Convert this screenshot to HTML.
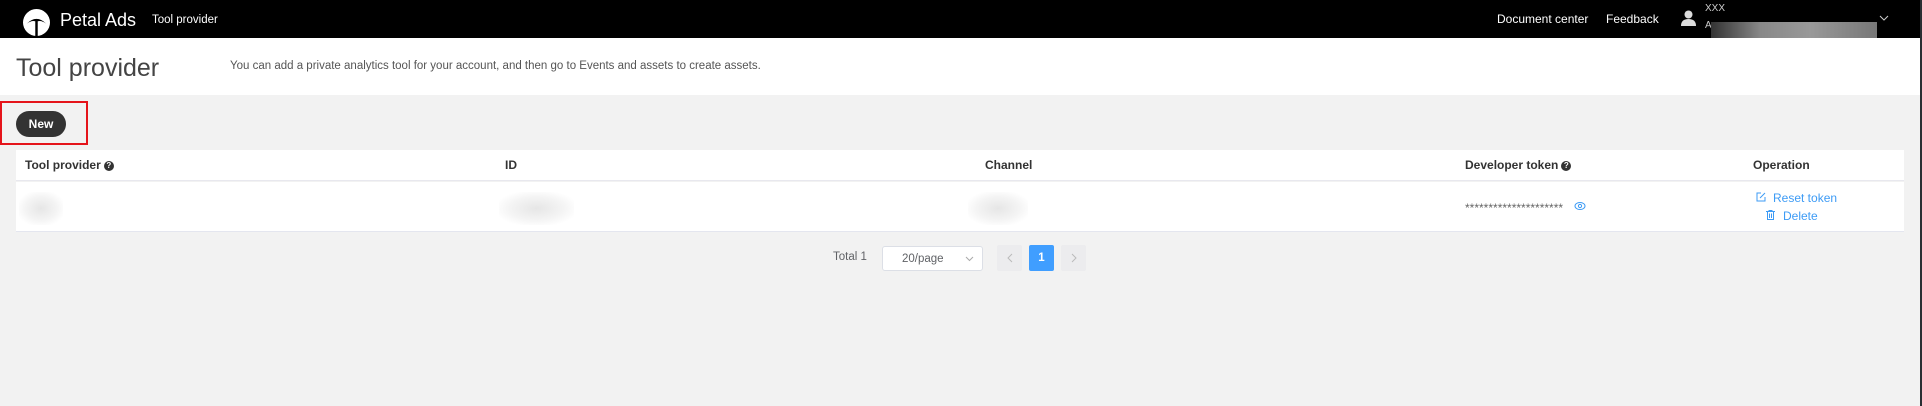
<!DOCTYPE html>
<html><head><style>
*{margin:0;padding:0;box-sizing:border-box}
body{width:1922px;height:406px;background:#f2f2f2;font-family:"Liberation Sans",sans-serif;position:relative;overflow:hidden}
.a{position:absolute;white-space:nowrap}
.hd{position:absolute;left:0;top:0;width:1920px;height:38px;background:#000}
.th{font-size:12px;font-weight:bold;color:#333}
.q{display:inline-block;width:10px;height:10px;border-radius:50%;background:#333;color:#fff;font-size:8px;text-align:center;line-height:10px;vertical-align:1px;margin-left:3px}
.blur{position:absolute;background:radial-gradient(ellipse at center,#e6e6e6 0%,#f4f4f4 50%,#fff 80%)}
.lnk{color:#3d9bf5;font-size:12px}
</style></head><body>
<div class="hd"></div>
<svg class="a" style="left:23px;top:9px" width="27" height="27" viewBox="0 0 22 22"><circle cx="11" cy="11" r="11" fill="#fff"/><path d="M3 12 Q11 4 19 12 Q15 9 12 10 L12 22 L10 22 L10 10 Q7 9 3 12Z" fill="#000"/></svg>
<div class="a" style="left:60px;top:10px;font-size:18px;color:#fff">Petal Ads</div>
<div class="a" style="left:152px;top:14px;font-size:11.5px;color:#fff">Tool provider</div>
<div class="a" style="left:1497px;top:12px;font-size:12px;color:#fff">Document center</div>
<div class="a" style="left:1606px;top:12px;font-size:12px;color:#fff">Feedback</div>
<svg class="a" style="left:1681px;top:10px" width="15" height="16" viewBox="0 0 15 16"><circle cx="7.5" cy="4.5" r="4" fill="#ddd"/><path d="M0 16 Q0 9 7.5 9 Q15 9 15 16Z" fill="#ddd"/></svg>
<div class="a" style="left:1705px;top:3px;font-size:10px;color:#ccc">XXX</div>
<div class="a" style="left:1705px;top:20px;font-size:10px;color:#ccc">A</div>
<div class="a" style="left:1711px;top:22px;width:166px;height:21px;background:linear-gradient(90deg,#333,#888 30%,#999 60%,#777)"></div>
<svg class="a" style="left:1879px;top:15px" width="10" height="6"><path d="M1 1L5 5L9 1" stroke="#ccc" fill="none"/></svg>
<div class="a" style="left:0;top:38px;width:1920px;height:57px;background:#fff"></div>
<div class="a" style="left:16px;top:54px;font-size:25px;color:#444">Tool provider</div>
<div class="a" style="left:230px;top:60px;font-size:11.5px;color:#555">You can add a private analytics tool for your account, and then go to Events and assets to create assets.</div>
<div class="a" style="left:0;top:101px;width:88px;height:44px;border:2px solid #e5141b"></div>
<div class="a" style="left:16px;top:111px;width:50px;height:26px;border-radius:13px;background:#333;color:#fff;font-size:12px;font-weight:bold;text-align:center;line-height:26px">New</div>
<div class="a" style="left:16px;top:150px;width:1888px;height:31px;background:#fff;border-bottom:1px solid #e8e8ee"></div>
<div class="a" style="left:16px;top:182px;width:1888px;height:50px;background:#fff;border-bottom:1px solid #e4e6ef"></div>
<div class="a th" style="left:25px;top:158px">Tool provider<span class="q">?</span></div>
<div class="a th" style="left:505px;top:158px">ID</div>
<div class="a th" style="left:985px;top:158px">Channel</div>
<div class="a th" style="left:1465px;top:158px">Developer token<span class="q">?</span></div>
<div class="a th" style="left:1753px;top:158px">Operation</div>
<div class="blur" style="left:19px;top:192px;width:44px;height:33px"></div>
<div class="blur" style="left:499px;top:192px;width:75px;height:33px"></div>
<div class="blur" style="left:968px;top:192px;width:60px;height:33px"></div>
<div class="a" style="left:1465px;top:201px;font-size:12px;color:#666">*********************</div>
<svg class="a" style="left:1574px;top:200px" width="12" height="12" viewBox="0 0 12 12"><ellipse cx="6" cy="6" rx="5" ry="3.5" stroke="#3d9bf5" fill="none"/><circle cx="6" cy="6" r="1.6" stroke="#3d9bf5" fill="none"/></svg>
<svg class="a" style="left:1756px;top:192px" width="10" height="10" viewBox="0 0 10 10"><path d="M5 1H1V9H9V5M4 6L9 1" stroke="#3d9bf5" fill="none"/></svg>
<div class="a lnk" style="left:1773px;top:191px">Reset token</div>
<svg class="a" style="left:1766px;top:210px" width="9" height="10" viewBox="0 0 9 10"><path d="M0 1.5H9M3 1.5V0.5H6V1.5M1.5 1.5V9.5H7.5V1.5M3.5 3.5V8M5.5 3.5V8" stroke="#3d9bf5" fill="none"/></svg>
<div class="a lnk" style="left:1783px;top:209px">Delete</div>
<div class="a" style="left:833px;top:251px;font-size:11.5px;color:#606266">Total 1</div>
<div class="a" style="left:882px;top:246px;width:101px;height:25px;background:#fff;border:1px solid #dcdfe6;border-radius:3px"></div>
<div class="a" style="left:902px;top:253px;font-size:11.5px;color:#606266">20/page</div>
<svg class="a" style="left:965px;top:256px" width="9" height="6"><path d="M1 1L4.5 4.5L8 1" stroke="#aaa" fill="none"/></svg>
<div class="a" style="left:997px;top:245px;width:25px;height:26px;background:#ececee;border-radius:2px"></div>
<svg class="a" style="left:1007px;top:253px" width="6" height="10"><path d="M5 1L1 5L5 9" stroke="#bbb" fill="none"/></svg>
<div class="a" style="left:1029px;top:245px;width:25px;height:26px;background:#409eff;border-radius:2px;color:#fff;font-size:11.5px;font-weight:bold;text-align:center;line-height:26px">1</div>
<div class="a" style="left:1061px;top:245px;width:25px;height:26px;background:#ececee;border-radius:2px"></div>
<svg class="a" style="left:1071px;top:253px" width="6" height="10"><path d="M1 1L5 5L1 9" stroke="#bbb" fill="none"/></svg>
<div class="a" style="left:1920px;top:0;width:2px;height:406px;background:#2a2e33"></div>
</body></html>
